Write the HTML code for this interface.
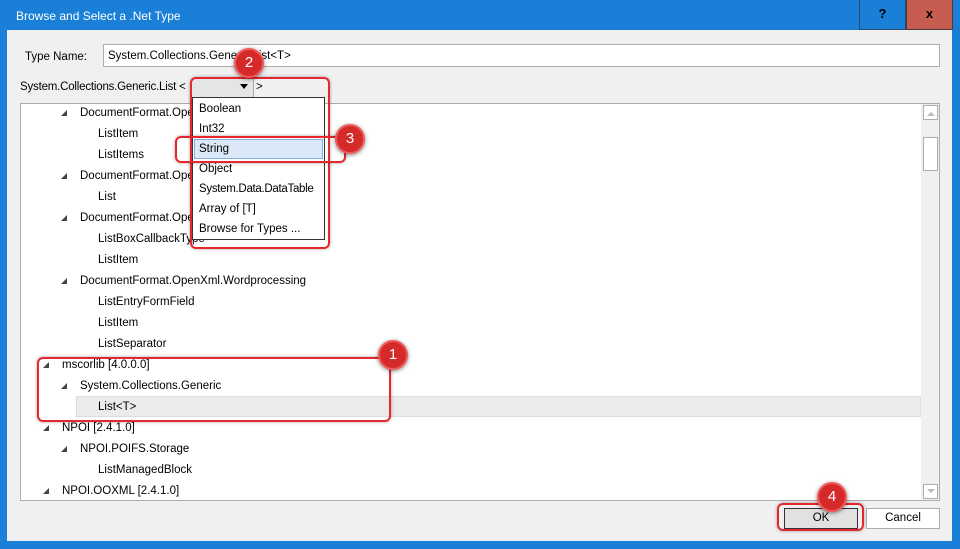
<!DOCTYPE html>
<html><head><style>
*{margin:0;padding:0;box-sizing:border-box}
body{width:960px;height:549px;background:#1a7fd7;font-family:"Liberation Sans",sans-serif;font-size:11.5px;color:#000;position:relative;overflow:hidden}
.a{position:absolute}
.client{left:7px;top:30px;width:945px;height:511px;background:#f0f0f0}
.t{position:absolute;white-space:nowrap;line-height:14px}
.tri{position:absolute;width:0;height:0;border-left:6px solid transparent;border-bottom:6px solid #444}
.rb{position:absolute;border:2px solid #e8262e;border-radius:6px;box-shadow:0 0 3px rgba(0,0,0,.35)}
.circ{position:absolute;width:30px;height:30px;border-radius:50%;background:#d42a2a;border:2px solid #f25a5a;color:#fff;font-size:15px;text-align:center;line-height:26px;box-shadow:0 1px 4px rgba(0,0,0,.5)}
</style></head><body>
<div class="t" style="left:16px;top:9px;color:#fff;font-size:12px">Browse and Select a .Net Type</div>
<div class="a" style="left:859px;top:0;width:47px;height:30px;border:1px solid #2b4a6a;border-top:none;color:#000;font-weight:bold;text-align:center;line-height:28px;font-size:13px">?</div>
<div class="a" style="left:906px;top:0;width:47px;height:30px;background:#c75c51;border:1px solid #4a3a3a;border-top:none;font-weight:bold;text-align:center;line-height:28px;font-size:13px">x</div>
<div class="a client"></div>
<div class="t" style="left:25px;top:50px">Type Name:</div>
<div class="a" style="left:103px;top:44px;width:837px;height:23px;background:#fff;border:1px solid #adadad"></div>
<div class="t" style="left:108px;top:49px">System.Collections.Generic.List&lt;T&gt;</div>
<div class="t" style="left:20px;top:80px;letter-spacing:-0.2px">System.Collections.Generic.List &lt;</div>
<div class="a" style="left:192px;top:77px;width:62px;height:20px;background:#e5e5e5;border-right:1px solid #aaa"></div>
<div class="a" style="left:240px;top:84px;border-left:4px solid transparent;border-right:4px solid transparent;border-top:5px solid #000"></div>
<div class="t" style="left:256px;top:80px">&gt;</div>
<div class="a" style="left:20px;top:103px;width:920px;height:398px;background:#fff;border:1px solid #adadad"></div>
<div class="a" style="left:921px;top:104px;width:18px;height:396px;background:#f0f0f0"></div>
<div class="a" style="left:923px;top:105px;width:15px;height:15px;background:#fff;border:1px solid #adadad"></div>
<div class="a" style="left:927px;top:112px;border-left:4px solid transparent;border-right:4px solid transparent;border-bottom:4px solid #bbb"></div>
<div class="a" style="left:923px;top:137px;width:15px;height:34px;background:#fff;border:1px solid #adadad"></div>
<div class="a" style="left:923px;top:484px;width:15px;height:15px;background:#fff;border:1px solid #adadad"></div>
<div class="a" style="left:927px;top:489px;border-left:4px solid transparent;border-right:4px solid transparent;border-top:4px solid #bbb"></div>
<div class="a" style="left:76px;top:396px;width:845px;height:21px;background:#ebebeb;border:1px solid #ddd"></div>

<div class="tri" style="left:61px;top:110px"></div><div class="t" style="left:80px;top:106px">DocumentFormat.OpenXml</div>
<div class="t" style="left:98px;top:127px">ListItem</div>
<div class="t" style="left:98px;top:148px">ListItems</div>
<div class="tri" style="left:61px;top:173px"></div><div class="t" style="left:80px;top:169px">DocumentFormat.OpenXml.Presentation</div>
<div class="t" style="left:98px;top:190px">List</div>
<div class="tri" style="left:61px;top:215px"></div><div class="t" style="left:80px;top:211px">DocumentFormat.OpenXml</div>
<div class="t" style="left:98px;top:232px">ListBoxCallbackType</div>
<div class="t" style="left:98px;top:253px">ListItem</div>
<div class="tri" style="left:61px;top:278px"></div><div class="t" style="left:80px;top:274px">DocumentFormat.OpenXml.Wordprocessing</div>
<div class="t" style="left:98px;top:295px">ListEntryFormField</div>
<div class="t" style="left:98px;top:316px">ListItem</div>
<div class="t" style="left:98px;top:337px">ListSeparator</div>
<div class="tri" style="left:43px;top:362px"></div><div class="t" style="left:62px;top:358px">mscorlib [4.0.0.0]</div>
<div class="tri" style="left:61px;top:383px"></div><div class="t" style="left:80px;top:379px">System.Collections.Generic</div>
<div class="t" style="left:98px;top:400px">List&lt;T&gt;</div>
<div class="tri" style="left:43px;top:425px"></div><div class="t" style="left:62px;top:421px">NPOI [2.4.1.0]</div>
<div class="tri" style="left:61px;top:446px"></div><div class="t" style="left:80px;top:442px">NPOI.POIFS.Storage</div>
<div class="t" style="left:98px;top:463px">ListManagedBlock</div>
<div class="tri" style="left:43px;top:488px"></div><div class="t" style="left:62px;top:484px">NPOI.OOXML [2.4.1.0]</div>

<div class="a" style="left:192px;top:97px;width:133px;height:143px;background:#fff;border:1px solid #333"></div>
<div class="a" style="left:194px;top:139px;width:129px;height:20px;background:#dbe8f8;border:1px solid #7eb0e6"></div>
<div class="t" style="left:199px;top:102px">Boolean</div>
<div class="t" style="left:199px;top:122px">Int32</div>
<div class="t" style="left:199px;top:142px">String</div>
<div class="t" style="left:199px;top:162px">Object</div>
<div class="t" style="left:199px;top:182px;letter-spacing:-0.3px">System.Data.DataTable</div>
<div class="t" style="left:199px;top:202px">Array of [T]</div>
<div class="t" style="left:199px;top:222px">Browse for Types ...</div>

<div class="a" style="left:784px;top:508px;width:74px;height:21px;background:#e1e1e1;border:1px solid #333;text-align:center;line-height:19px">OK</div>
<div class="a" style="left:866px;top:508px;width:74px;height:21px;background:#fff;border:1px solid #adadad;text-align:center;line-height:19px">Cancel</div>

<div class="rb" style="left:190px;top:77px;width:140px;height:172px"></div>
<div class="rb" style="left:175px;top:136px;width:171px;height:27px"></div>
<div class="rb" style="left:37px;top:357px;width:354px;height:65px"></div>
<div class="rb" style="left:777px;top:503px;width:87px;height:28px"></div>
<div class="circ" style="left:234px;top:48px">2</div>
<div class="circ" style="left:335px;top:124px">3</div>
<div class="circ" style="left:378px;top:340px">1</div>
<div class="circ" style="left:817px;top:482px">4</div>
</body></html>
